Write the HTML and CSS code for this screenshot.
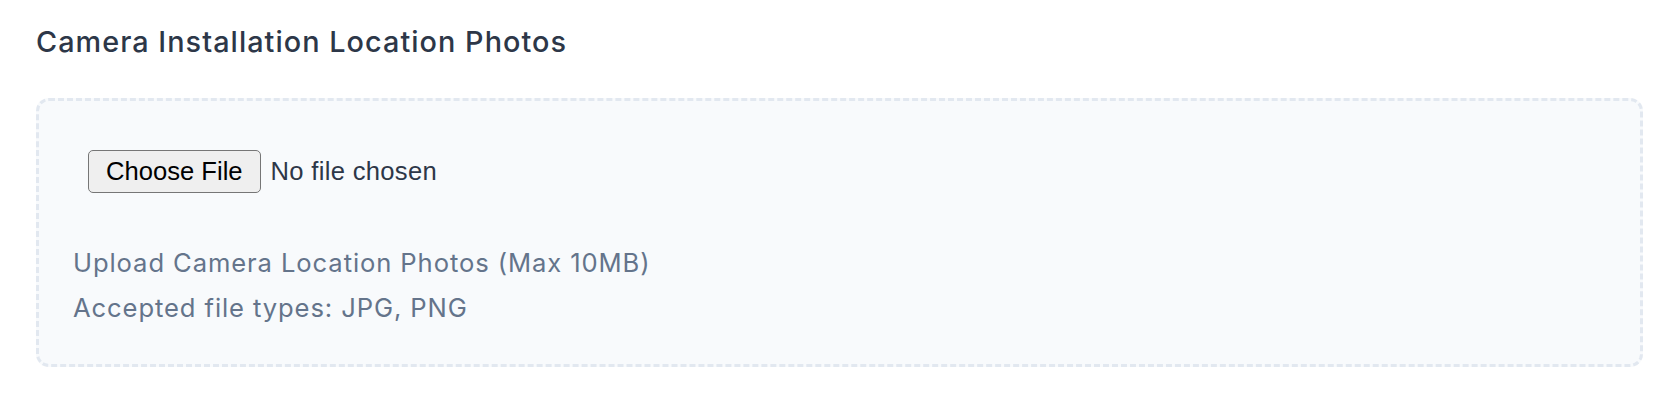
FILE: index.html
```html
<!DOCTYPE html>
<html lang="en">
<head>
<meta charset="UTF-8">
<meta name="viewport" content="width=device-width, initial-scale=1.0">
<title>Camera Installation Location Photos</title>
<link rel="stylesheet" href="styles.css">
</head>
<body>
    <div class="section">
        <h2 class="title">Camera Installation Location Photos</h2>
        <div class="dropzone">
            <div class="picker">
                <input type="file" id="cameraPhotos" accept=".jpg,.jpeg,.png">
            </div>
            <p class="hint">Upload Camera Location Photos (Max 10MB)</p>
            <p class="hint hint-small">Accepted file types: JPG, PNG</p>
        </div>
    </div>
</body>
</html>
```

FILE: styles.css
```css
body {
    margin: 0;
    padding: 0;
    background-color: #fff;
    font-family: Inter, "Noto Sans", sans-serif;
    color: #2d3748;
}
.section {
    padding: 22px 37px 0 36px;
}
.title {
    margin: 0 0 36px 0;
    font-size: 28.8px;
    line-height: 40px;
    font-weight: 500;
    letter-spacing: 1.05px;
    color: #2d3748;
}
.dropzone {
    background-color: #f8fafc;
    border: 3px dashed #e2e8f0;
    border-radius: 13px;
    padding: 49px 34px 36px 34px;
}
.picker {
    padding-left: 15px;
    margin-bottom: 51px;
}
.picker input {
    font-family: "Liberation Sans", Arial, sans-serif;
    font-size: 25.6px;
    letter-spacing: 0.3px;
    color: #2d3748;
}
.picker input::file-selector-button {
    font-family: "Liberation Sans", Arial, sans-serif;
    font-size: 25.6px;
    letter-spacing: 0;
    color: #000;
    height: 43px;
    padding: 0 17px;
    margin: 0 10px 0 0;
    background-color: #efefef;
    border: 1px solid #767676;
    border-radius: 5px;
}
.hint {
    margin: 0;
    font-size: 25.6px;
    line-height: 38.4px;
    letter-spacing: 0.9px;
    color: #64748b;
}
.hint-small {
    margin-top: 7px;
}
```
